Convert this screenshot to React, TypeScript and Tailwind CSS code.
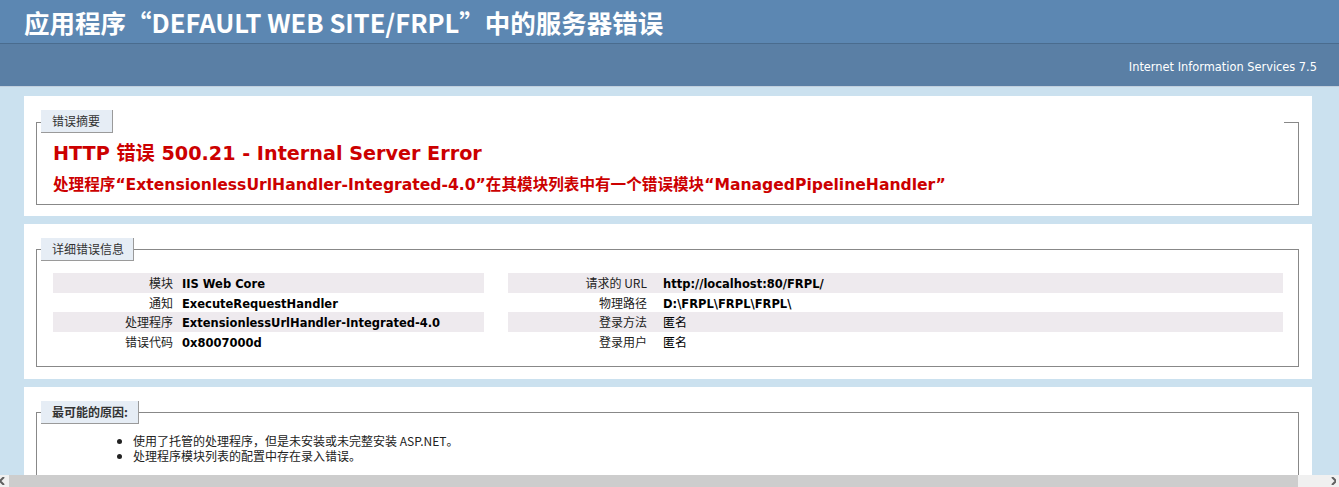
import React from 'react';

const cjk = "font-['Noto_Sans_CJK_SC',sans-serif]";
const verdana = "font-['DejaVu_Sans','Noto_Sans_CJK_SC',sans-serif]";

const Legend = ({ children, width, bold }: { children: React.ReactNode, width: string, bold?: boolean }) => (
    <div className={`${width} shrink-0 -mt-[12px] h-[23px] bg-[#e6edf5] border-r border-b border-[#9a9a9a] pl-[11px] flex items-center text-[12px] text-[#333] ${cjk} ${bold ? 'font-bold' : ''}`}>
        {children}
    </div>
);

const Row = ({ label, value, alt, labelWidth, gap, plain }: { label: string, value: string, alt?: boolean, labelWidth: string, gap: string, plain?: boolean }) => (
    <div className={`flex h-[19.5px] items-baseline leading-[19.5px] ${alt ? 'bg-[#eeeaee]' : ''}`}>
        <div className={`${labelWidth} shrink-0 text-right text-[12px] text-[#222] ${cjk}`}>{label}</div>
        <div className={`${gap} text-[11.5px] text-black ${plain ? `${cjk} text-[12px]` : `${verdana} font-bold`}`}>{value}</div>
    </div>
);

export default function App() {
    return (
        <div className={`h-[487px] w-[1339px] overflow-hidden flex flex-col bg-[#cbe1ef] ${verdana}`}>
            <div className="flex-1 overflow-hidden">
                {/* header */}
                <div className="h-[43px] bg-[#5c87b2] flex items-center pl-[24px]">
                    <h1 className={`text-[25.5px] font-bold text-white leading-none ${cjk}`}>
                        应用程序“DEFAULT WEB SITE/FRPL”中的服务器错误
                    </h1>
                </div>
                <div className="h-[44px] bg-[#5a7fa5] border-t border-[#4a6c8e] border-b border-b-[#c1cfdd] flex items-center justify-end pr-[22px] pt-[6px]">
                    <p className="text-[11.4px] text-white">Internet Information Services 7.5</p>
                </div>

                {/* summary */}
                <div className="ml-[24px] w-[1288px] mt-[9px] bg-white pt-[26px] pl-[12px] pr-[13px] pb-[11px]">
                    <div className="border-l border-r border-b border-[#888]">
                        <div className="flex items-start">
                            <div className="w-[4px] border-t border-[#888]" />
                            <Legend width="w-[72px]">错误摘要</Legend>
                            <div className="flex-1" />
                            <div className="w-[14px] border-t border-[#888]" />
                        </div>
                        <div className={`pl-[16px] pb-[9px] text-[#cc0000] font-bold ${verdana}`}>
                            <h3 className="mt-[9px] text-[19.2px] leading-[24px]">HTTP 错误 500.21 - Internal Server Error</h3>
                            <h4 className="mt-[9px] text-[15.6px] leading-[20px]">处理程序“ExtensionlessUrlHandler-Integrated-4.0”在其模块列表中有一个错误模块“ManagedPipelineHandler”</h4>
                        </div>
                    </div>
                </div>

                {/* details */}
                <div className="ml-[24px] w-[1288px] mt-[8px] bg-white pt-[25px] pl-[12px] pr-[13px] pb-[12px]">
                    <div className="border border-[#888]">
                        <div className="flex items-start">
                            <div className="w-[4px]" />
                            <Legend width="w-[93px]">详细错误信息</Legend>
                        </div>
                        <div className="flex gap-[24px] pl-[16px] pr-[15px] pt-[12px] pb-[15px]">
                            <div className="w-[431px]">
                                <Row alt label="模块" value="IIS Web Core" labelWidth="w-[120px]" gap="pl-[9px]" />
                                <Row label="通知" value="ExecuteRequestHandler" labelWidth="w-[120px]" gap="pl-[9px]" />
                                <Row alt label="处理程序" value="ExtensionlessUrlHandler-Integrated-4.0" labelWidth="w-[120px]" gap="pl-[9px]" />
                                <Row label="错误代码" value="0x8007000d" labelWidth="w-[120px]" gap="pl-[9px]" />
                            </div>
                            <div className="flex-1">
                                <Row alt label="请求的 URL" value="http://localhost:80/FRPL/" labelWidth="w-[139px]" gap="pl-[16px]" />
                                <Row label="物理路径" value="D:\FRPL\FRPL\FRPL\" labelWidth="w-[139px]" gap="pl-[16px]" />
                                <Row alt plain label="登录方法" value="匿名" labelWidth="w-[139px]" gap="pl-[16px]" />
                                <Row plain label="登录用户" value="匿名" labelWidth="w-[139px]" gap="pl-[16px]" />
                            </div>
                        </div>
                    </div>
                </div>

                {/* causes */}
                <div className="ml-[24px] w-[1288px] mt-[8px] bg-white pt-[25px] pl-[12px] pr-[13px] pb-[12px]">
                    <div className="border border-[#888]">
                        <div className="flex items-start">
                            <div className="w-[4px]" />
                            <Legend width="w-[98px]" bold>最可能的原因:</Legend>
                        </div>
                        <ul className={`list-disc pl-[96px] pt-[9px] pb-[40px] text-[12px] leading-[15px] text-[#222] ${cjk}`}>
                            <li className="h-[15px]">使用了托管的处理程序，但是未安装或未完整安装 ASP.NET。</li>
                            <li className="h-[15px]">处理程序模块列表的配置中存在录入错误。</li>
                        </ul>
                    </div>
                </div>
            </div>

            {/* horizontal scrollbar */}
            <div className="h-[12px] shrink-0 flex bg-[#f0f0f0]">
                <div className="w-[9px] flex items-center">
                    <svg width="5" height="8" viewBox="0 0 5 8"><path d="M4 0 L0 4 L4 8" fill="none" stroke="#606060" strokeWidth="2" /></svg>
                </div>
                <div className="w-[1289px] bg-[#cdcdcd]" />
                <div className="flex-1 flex items-center justify-end pr-[3px]">
                    <svg width="5" height="8" viewBox="0 0 5 8"><path d="M1 0 L5 4 L1 8" fill="none" stroke="#606060" strokeWidth="2" /></svg>
                </div>
            </div>
        </div>
    );
}
